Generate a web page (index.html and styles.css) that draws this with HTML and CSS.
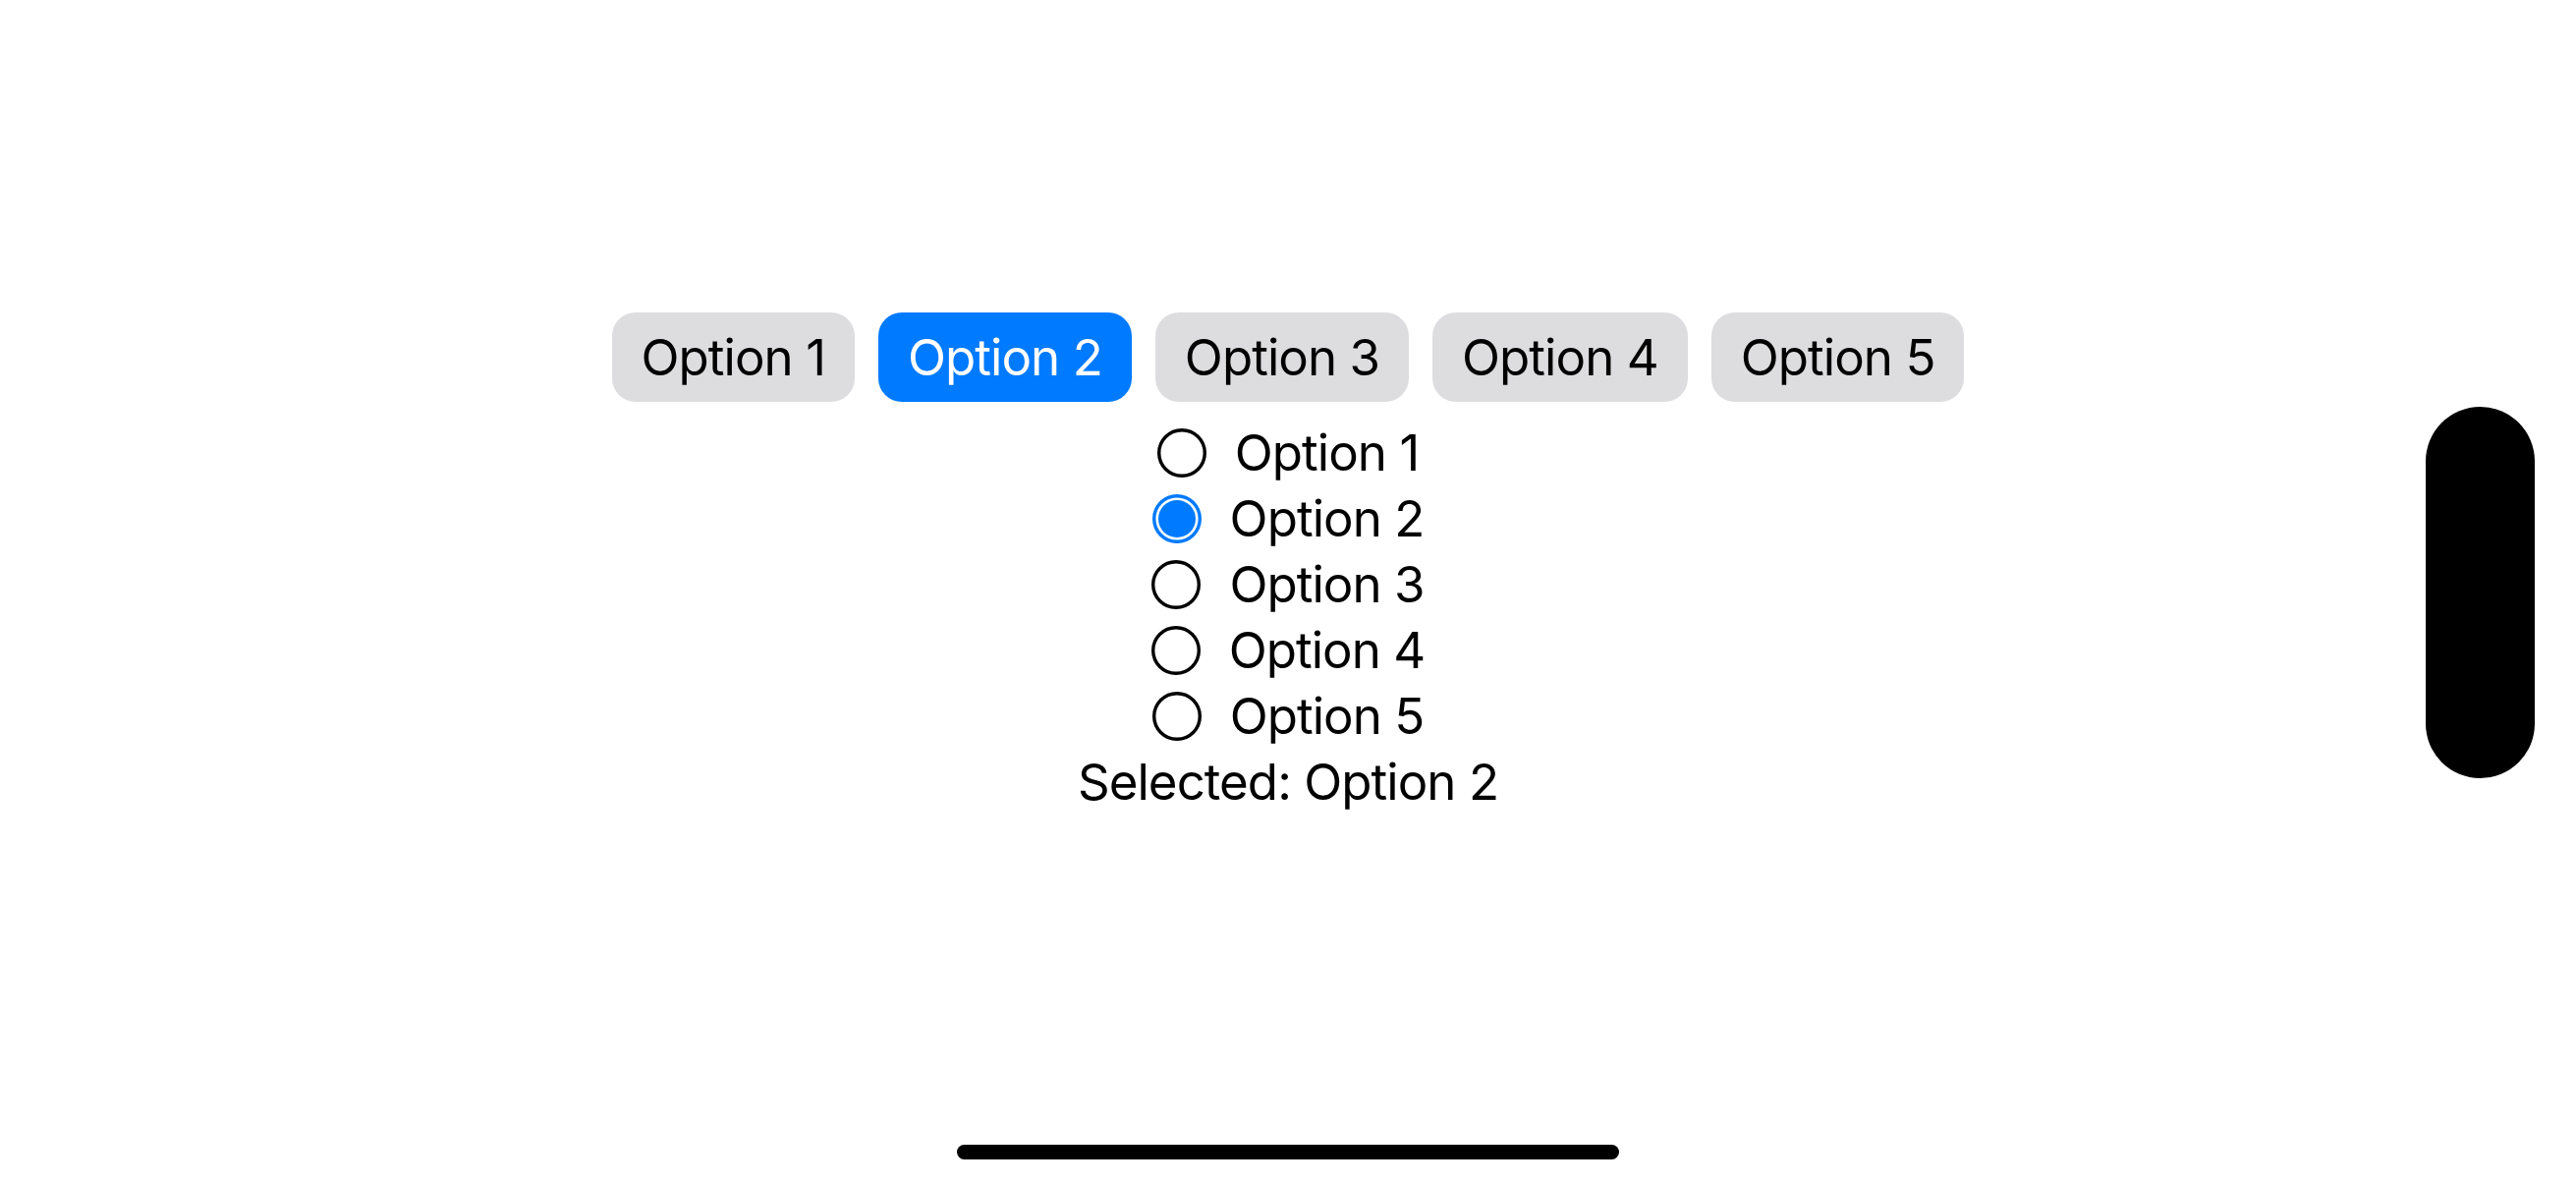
FILE: index.html
```html
<!DOCTYPE html>
<html lang="en">
<head>
<meta charset="utf-8">
<title>Options</title>
<link rel="stylesheet" href="styles.css">
</head>
<body>
<div class="screen">
  <main class="content">
    <div class="segments">
      <div class="seg">Option 1</div>
      <div class="seg seg-active">Option 2</div>
      <div class="seg">Option 3</div>
      <div class="seg">Option 4</div>
      <div class="seg">Option 5</div>
    </div>
    <div class="radios">
      <div class="radio-row">
        <svg class="radio" viewBox="0 0 50 50"><circle cx="25" cy="25" r="23.3" fill="none" stroke="#000" stroke-width="3.4"/></svg>
        <span class="label">Option 1</span>
      </div>
      <div class="radio-row">
        <svg class="radio" viewBox="0 0 50 50"><circle cx="25" cy="25" r="23.3" fill="none" stroke="#007aff" stroke-width="3.4"/><circle cx="25" cy="25" r="19" fill="#007aff"/></svg>
        <span class="label">Option 2</span>
      </div>
      <div class="radio-row">
        <svg class="radio" viewBox="0 0 50 50"><circle cx="25" cy="25" r="23.3" fill="none" stroke="#000" stroke-width="3.4"/></svg>
        <span class="label">Option 3</span>
      </div>
      <div class="radio-row">
        <svg class="radio" viewBox="0 0 50 50"><circle cx="25" cy="25" r="23.3" fill="none" stroke="#000" stroke-width="3.4"/></svg>
        <span class="label">Option 4</span>
      </div>
      <div class="radio-row">
        <svg class="radio" viewBox="0 0 50 50"><circle cx="25" cy="25" r="23.3" fill="none" stroke="#000" stroke-width="3.4"/></svg>
        <span class="label">Option 5</span>
      </div>
      <div class="selected">Selected: Option 2</div>
    </div>
  </main>
  <div class="island"></div>
  <div class="home-indicator"></div>
</div>
</body>
</html>
```

FILE: styles.css
```css
html, body {
  margin: 0;
  padding: 0;
  background: #ffffff;
}

.screen {
  position: relative;
  width: 2622px;
  height: 1206px;
  overflow: hidden;
  background: #ffffff;
  font-family: "Inter", "Roboto", "Liberation Sans", sans-serif;
  font-size: 51px;
  letter-spacing: -0.95px;
  color: #000000;
}

.content {
  display: flex;
  flex-direction: column;
  align-items: center;
  padding-top: 318px;
}

.segments {
  display: flex;
  gap: 24px;
}

.seg {
  height: 91px;
  padding: 0 30px;
  display: flex;
  align-items: center;
  border-radius: 24px;
  background: #dddddf;
  color: #000000;
  line-height: 1;
}

.seg-active {
  background: #007aff;
  color: #ffffff;
}

.radios {
  display: flex;
  flex-direction: column;
  align-items: center;
  margin-top: 18px;
}

.radio-row {
  height: 67px;
  display: flex;
  align-items: center;
  gap: 29px;
}

.radio {
  width: 50px;
  height: 50px;
  display: block;
}

.label {
  line-height: 67px;
}

.selected {
  height: 67px;
  line-height: 67px;
}

.island {
  position: absolute;
  left: 2469px;
  top: 414px;
  width: 111px;
  height: 378px;
  border-radius: 56px;
  background: #000000;
}

.home-indicator {
  position: absolute;
  left: 974px;
  top: 1165px;
  width: 674px;
  height: 15px;
  border-radius: 8px;
  background: #000000;
}
```
